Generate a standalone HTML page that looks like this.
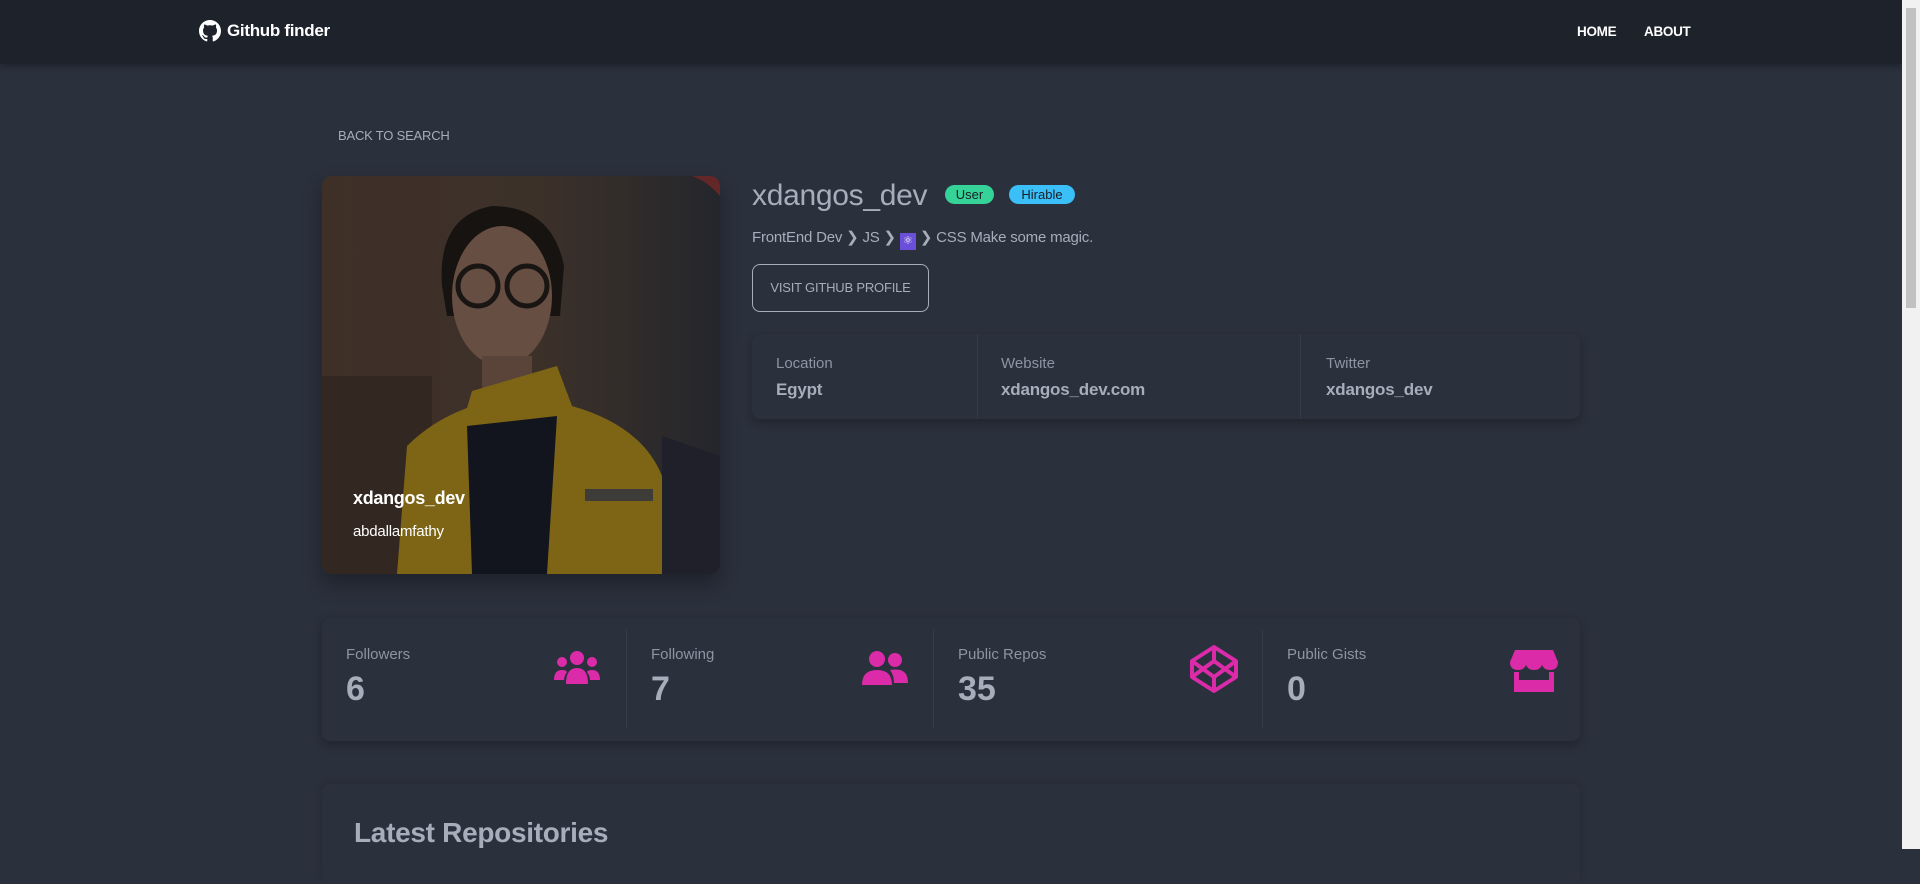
<!DOCTYPE html>
<html><head><meta charset="utf-8"><style>
*{margin:0;padding:0;box-sizing:border-box}
html,body{width:1920px;height:849px;overflow:hidden;background:#2a303c;font-family:"Liberation Sans",sans-serif;color:#a6adbb}
.nav{position:absolute;left:0;top:0;width:1902px;height:64px;background:#1d222b;box-shadow:0 2px 6px rgba(0,0,0,.3)}
.logo{position:absolute;left:199px;top:20px;display:flex;align-items:center;color:#fff;font-weight:bold;font-size:17px;letter-spacing:-.3px}
.logo svg{margin-right:6px}
.navl{position:absolute;top:24px;color:#fff;font-weight:bold;font-size:13.5px;letter-spacing:-.3px}
.sb{position:absolute;left:1902px;top:0;width:18px;height:849px;background:#f1f1f1}
.sb div{position:absolute;left:4px;top:8px;width:10px;height:300px;background:#c1c1c1}
.back{position:absolute;left:338px;top:128px;font-size:13px;color:#a6adbb;letter-spacing:-.2px}
.photo{position:absolute;left:322px;top:176px;width:398px;height:398px;border-radius:10px;overflow:hidden;box-shadow:0 10px 20px rgba(0,0,0,.3)}
.pt{position:absolute;left:31px;color:#fff}
h1{position:absolute;left:752px;top:179px;font-size:30px;font-weight:normal;color:#a6adbb;letter-spacing:-.3px}
.badge{position:absolute;top:185px;height:19px;border-radius:10px;font-size:13px;color:#1a1d26;text-align:center;line-height:19px}
.bio{position:absolute;left:752px;top:228px;font-size:15px;letter-spacing:-.2px}
.btn{position:absolute;left:752px;top:264px;width:177px;height:48px;border:1px solid #a6adbb;border-radius:8px;font-size:13px;line-height:46px;text-align:center;color:#a6adbb;letter-spacing:-.2px}
.info{position:absolute;left:752px;top:334px;width:828px;height:85px;border-radius:8px;box-shadow:0 4px 10px rgba(0,0,0,.25);background:#2a303c}
.lbl{position:absolute;top:21px;font-size:15px;color:#8d95a3}
.val{position:absolute;top:46px;font-size:17px;font-weight:bold;color:#a6adbb;letter-spacing:-.2px}
.div{position:absolute;top:0;width:1px;background:#353b48}
.stats{position:absolute;left:322px;top:618px;width:1258px;height:123px;border-radius:8px;box-shadow:0 4px 10px rgba(0,0,0,.25);background:#2a303c}
.sl{position:absolute;top:28px;font-size:15px;color:#8d95a3}
.sv{position:absolute;top:52px;font-size:34px;font-weight:bold;color:#a6adbb}
.ic{position:absolute;top:32px}
.repo{position:absolute;left:322px;top:784px;width:1258px;height:100px;border-radius:8px;box-shadow:0 -2px 8px rgba(0,0,0,.12)}
.repo h2{position:absolute;left:32px;top:33px;font-size:28px;font-weight:bold;color:#a6adbb;letter-spacing:-.3px}
</style></head><body>
<div class="nav">
 <div class="logo"><svg width="22" height="22" viewBox="0 0 16 16"><path fill="#fff" d="M8 0C3.58 0 0 3.58 0 8c0 3.540 2.29 6.53 5.47 7.59.4.07.55-.17.55-.38 0-.19-.01-.82-.01-1.49-2.01.37-2.530-.49-2.690-.94-.09-.23-.48-.94-.82-1.13-.28-.15-.68-.52-.01-.53.63-.01 1.08.58 1.23.82.72 1.21 1.87.87 2.33.66.07-.52.28-.87.51-1.07-1.78-.2-3.64-.89-3.64-3.95 0-.87.31-1.59.82-2.15-.08-.2-.36-1.02.08-2.12 0 0 .67-.21 2.2.82.64-.18 1.32-.27 2-.27.68 0 1.36.09 2 .27 1.53-1.04 2.2-.82 2.2-.82.44 1.1.16 1.92.08 2.12.51.56.82 1.27.82 2.15 0 3.07-1.87 3.75-3.65 3.95.29.25.54.73.54 1.48 0 1.07-.01 1.93-.01 2.2 0 .21.15.46.55.38A8.013 8.013 0 0016 8c0-4.42-3.58-8-8-8z"/></svg>Github finder</div>
 <div class="navl" style="left:1577px">HOME</div>
 <div class="navl" style="left:1644px">ABOUT</div>
</div>
<div class="sb"><div></div></div>
<div class="back">BACK TO SEARCH</div>
<div class="photo">
<svg width="398" height="398" viewBox="0 0 398 398">
<defs><linearGradient id="bg" x1="0" y1="0" x2="1" y2="0"><stop offset="0" stop-color="#4d3b30"/><stop offset=".55" stop-color="#4a3c33"/><stop offset="1" stop-color="#2d2f36"/></linearGradient></defs>
<rect width="398" height="398" fill="url(#bg)"/>
<rect x="0" y="200" width="110" height="198" fill="#3e3029"/>
<path d="M370 0 L398 0 L398 20 Q385 5 370 0Z" fill="#7a3030"/>
<path d="M120 110 Q115 40 170 30 Q230 30 242 90 L238 140 L125 140Z" fill="#1c1815"/>
<ellipse cx="180" cy="120" rx="50" ry="70" fill="#7d6052"/>
<circle cx="156" cy="110" r="20" fill="none" stroke="#1f1a18" stroke-width="5"/>
<circle cx="205" cy="110" r="20" fill="none" stroke="#1f1a18" stroke-width="5"/>
<rect x="160" y="180" width="50" height="50" fill="#6e5347"/>
<path d="M75 398 L85 270 Q110 245 145 232 L150 215 L235 190 L250 230 Q320 250 340 300 L340 398Z" fill="#9a7c1c"/>
<path d="M145 250 L235 240 L225 398 L150 398Z" fill="#161a25"/>
<rect x="263" y="313" width="68" height="12" fill="#4b4a45"/>
<path d="M340 260 L398 280 L398 398 L340 398Z" fill="#262833"/>
<rect width="398" height="398" fill="rgba(0,0,0,.18)"/>
</svg>
<div class="pt" style="top:312px;font-size:18px;font-weight:bold;letter-spacing:-.3px">xdangos_dev</div>
<div class="pt" style="top:347px;font-size:15px;letter-spacing:-.2px">abdallamfathy</div>
</div>
<h1>xdangos_dev</h1>
<div class="badge" style="left:945px;width:49px;background:#36d399">User</div>
<div class="badge" style="left:1009px;width:66px;background:#3abff8">Hirable</div>
<div class="bio">FrontEnd Dev ❯ JS ❯ <span style="display:inline-block;width:16px;height:17px;background:#6b4fd8;color:#fff;font-size:11px;text-align:center;line-height:17px;vertical-align:-2px">⚛</span> ❯ CSS Make some magic.</div>
<div class="btn">VISIT GITHUB PROFILE</div>
<div class="info">
 <div class="lbl" style="left:24px">Location</div><div class="val" style="left:24px">Egypt</div>
 <div class="div" style="left:225px;height:85px"></div>
 <div class="lbl" style="left:249px">Website</div><div class="val" style="left:249px">xdangos_dev.com</div>
 <div class="div" style="left:548px;height:85px"></div>
 <div class="lbl" style="left:574px">Twitter</div><div class="val" style="left:574px">xdangos_dev</div>
</div>
<div class="stats">
 <div class="sl" style="left:24px">Followers</div><div class="sv" style="left:24px">6</div>
 <svg class="ic" style="left:230px" width="50" height="40" viewBox="0 0 50 40"><g fill="#db2ba8"><circle cx="25" cy="8" r="7"/><circle cx="10" cy="12" r="5"/><circle cx="40" cy="12" r="5"/><path d="M14 34 Q14 18 25 18 Q36 18 36 34Z"/><path d="M2 30 Q2 20 10 20 Q14 20 15 22 Q12 26 12 30Z"/><path d="M48 30 Q48 20 40 20 Q36 20 35 22 Q38 26 38 30Z"/></g></svg>
 <div class="div" style="left:304px;top:12px;height:98px"></div>
 <div class="sl" style="left:329px">Following</div><div class="sv" style="left:329px">7</div>
 <svg class="ic" style="left:538px" width="50" height="40" viewBox="0 0 50 40"><g fill="#db2ba8"><circle cx="17" cy="9" r="8"/><circle cx="35" cy="10" r="7"/><path d="M2 35 Q2 20 17 20 Q32 20 32 35Z"/><path d="M30 20 Q35 19 40 20 Q48 22 48 33 L34 33 Q34 25 30 20Z"/></g></svg>
 <div class="div" style="left:611px;top:12px;height:98px"></div>
 <div class="sl" style="left:636px">Public Repos</div><div class="sv" style="left:636px">35</div>
 <svg class="ic" style="left:866px;top:25px" width="52" height="52" viewBox="0 0 52 52"><g fill="none" stroke="#db2ba8" stroke-width="4" stroke-linejoin="round"><path d="M26 4 L48 18 L48 34 L26 48 L4 34 L4 18Z"/><path d="M4 18 L26 34 L48 18 M4 34 L26 18 L48 34 M26 4 L26 18 M26 34 L26 48"/></g></svg>
 <div class="div" style="left:940px;top:12px;height:98px"></div>
 <div class="sl" style="left:965px">Public Gists</div><div class="sv" style="left:965px">0</div>
 <svg class="ic" style="left:1188px;top:32px" width="48" height="44" viewBox="0 0 48 44"><g fill="#db2ba8"><path d="M5 0 L43 0 L48 12 Q48 20 40 20 Q34 20 32 15 Q30 20 24 20 Q18 20 16 15 Q14 20 8 20 Q0 20 0 12Z"/><path d="M4 22 L9 22 L9 30 L39 30 L39 22 L44 22 L44 42 L4 42Z"/></g></svg>
</div>
<div class="repo"><h2>Latest Repositories</h2></div>
</body></html>
